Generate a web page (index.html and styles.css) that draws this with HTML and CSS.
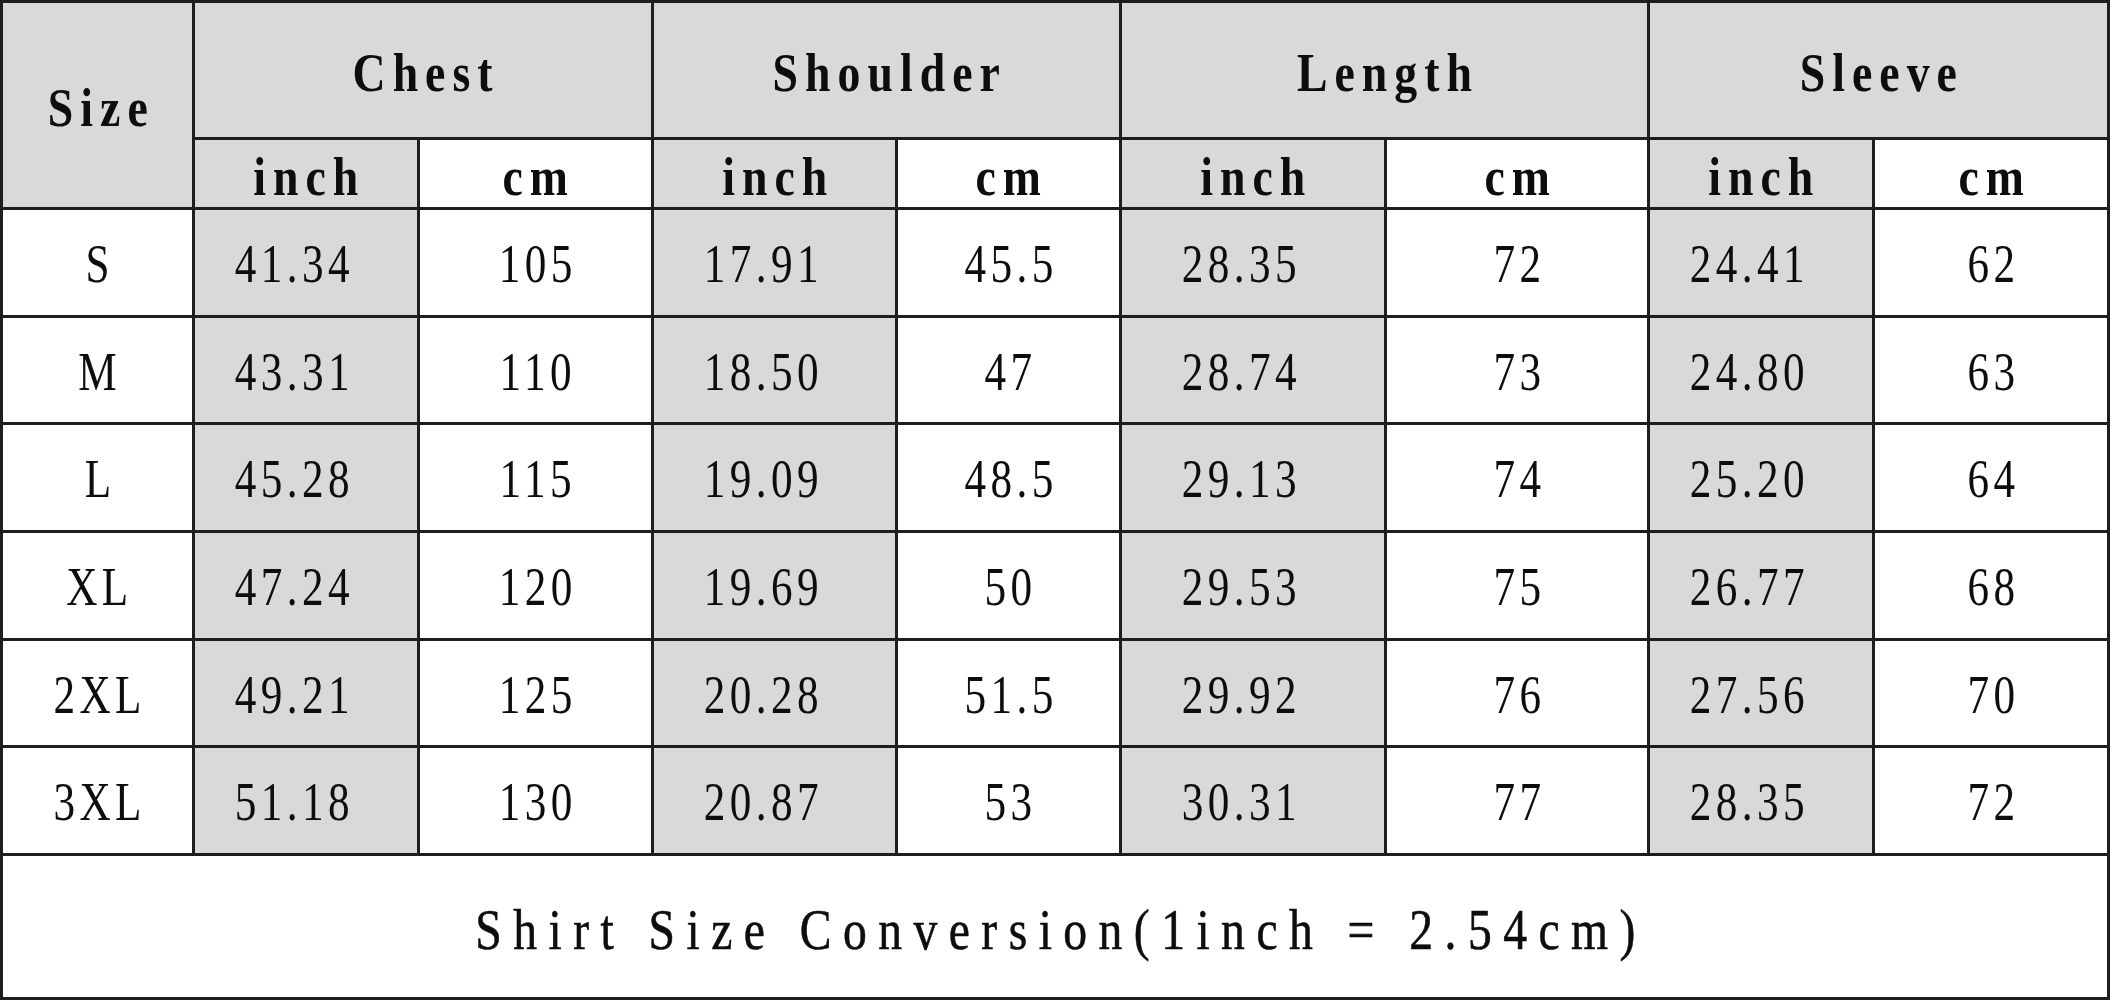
FILE: index.html
```html
<!DOCTYPE html>
<html>
<head>
<meta charset="utf-8">
<link rel="stylesheet" href="styles.css">
</head>
<body>
<table class="chart">
  <colgroup>
    <col class="c-size"><col class="c1"><col class="c2"><col class="c3"><col class="c4"><col class="c5"><col class="c6"><col class="c7"><col class="c8">
  </colgroup>
  <thead>
    <tr class="r-head">
      <th rowspan="2" class="g"><span class="t">Size</span></th>
      <th colspan="2" class="g"><span class="t">Chest</span></th>
      <th colspan="2" class="g"><span class="t">Shoulder</span></th>
      <th colspan="2" class="g"><span class="t">Length</span></th>
      <th colspan="2" class="g"><span class="t">Sleeve</span></th>
    </tr>
    <tr class="r-sub">
      <th class="g"><span class="t">inch</span></th><th><span class="t">cm</span></th>
      <th class="g"><span class="t">inch</span></th><th><span class="t">cm</span></th>
      <th class="g"><span class="t">inch</span></th><th><span class="t">cm</span></th>
      <th class="g"><span class="t">inch</span></th><th><span class="t">cm</span></th>
    </tr>
  </thead>
  <tbody>
    <tr class="r-a"><td><span class="t">S</span></td><td class="g in"><span class="t">41.34</span></td><td><span class="t">105</span></td><td class="g in"><span class="t">17.91</span></td><td><span class="t">45.5</span></td><td class="g in"><span class="t">28.35</span></td><td><span class="t">72</span></td><td class="g in"><span class="t">24.41</span></td><td><span class="t">62</span></td></tr>
    <tr class="r-b"><td><span class="t">M</span></td><td class="g in"><span class="t">43.31</span></td><td><span class="t">110</span></td><td class="g in"><span class="t">18.50</span></td><td><span class="t">47</span></td><td class="g in"><span class="t">28.74</span></td><td><span class="t">73</span></td><td class="g in"><span class="t">24.80</span></td><td><span class="t">63</span></td></tr>
    <tr class="r-a"><td><span class="t">L</span></td><td class="g in"><span class="t">45.28</span></td><td><span class="t">115</span></td><td class="g in"><span class="t">19.09</span></td><td><span class="t">48.5</span></td><td class="g in"><span class="t">29.13</span></td><td><span class="t">74</span></td><td class="g in"><span class="t">25.20</span></td><td><span class="t">64</span></td></tr>
    <tr class="r-a"><td><span class="t">XL</span></td><td class="g in"><span class="t">47.24</span></td><td><span class="t">120</span></td><td class="g in"><span class="t">19.69</span></td><td><span class="t">50</span></td><td class="g in"><span class="t">29.53</span></td><td><span class="t">75</span></td><td class="g in"><span class="t">26.77</span></td><td><span class="t">68</span></td></tr>
    <tr class="r-b"><td><span class="t">2XL</span></td><td class="g in"><span class="t">49.21</span></td><td><span class="t">125</span></td><td class="g in"><span class="t">20.28</span></td><td><span class="t">51.5</span></td><td class="g in"><span class="t">29.92</span></td><td><span class="t">76</span></td><td class="g in"><span class="t">27.56</span></td><td><span class="t">70</span></td></tr>
    <tr class="r-a"><td><span class="t">3XL</span></td><td class="g in"><span class="t">51.18</span></td><td><span class="t">130</span></td><td class="g in"><span class="t">20.87</span></td><td><span class="t">53</span></td><td class="g in"><span class="t">30.31</span></td><td><span class="t">77</span></td><td class="g in"><span class="t">28.35</span></td><td><span class="t">72</span></td></tr>
    <tr class="r-foot"><td colspan="9" class="foot"><span class="t">Shirt Size Conversion(1inch = 2.54cm)</span></td></tr>
  </tbody>
</table>
</body>
</html>
```

FILE: styles.css
```css
html, body {
  margin: 0;
  padding: 0;
  background: #ffffff;
}

.chart {
  border-collapse: separate;
  border-spacing: 0;
  table-layout: fixed;
  width: 2110px;
  height: 1000px;
  border-top: 3px solid #1e1e1e;
  border-left: 3px solid #1e1e1e;
  box-sizing: border-box;
}

.c-size { width: 192px; }
.c1 { width: 225px; }
.c2 { width: 234px; }
.c3 { width: 244px; }
.c4 { width: 224px; }
.c5 { width: 265px; }
.c6 { width: 263px; }
.c7 { width: 225px; }
.c8 { width: 235px; }

.chart th,
.chart td {
  border-right: 3px solid #1e1e1e;
  border-bottom: 3px solid #1e1e1e;
  padding: 0;
  text-align: center;
  vertical-align: middle;
  font-family: "Liberation Serif", "DejaVu Serif", serif;
  color: #0d0d0d;
  background: #ffffff;
  line-height: 1;
  white-space: nowrap;
}

.chart .g {
  background: #d9d9d9;
}

.r-head { height: 137px; }
.r-sub { height: 70px; }
.r-a { height: 108px; }
.r-b { height: 107px; }
.r-foot { height: 144px; }

.chart th {
  font-weight: bold;
  font-size: 52px;
  letter-spacing: 8px;
}

.chart th .t {
  display: inline-block;
  transform: scale(0.88, 1.04);
  padding-left: 8px;
  padding-top: 6px;
}

.chart td {
  font-weight: normal;
  font-size: 54px;
  letter-spacing: 5.5px;
}

.chart td .t {
  display: inline-block;
  transform: scale(0.8, 1.02);
  padding-left: 5.5px;
  padding-top: 3px;
}

.chart td.in {
  padding-right: 27px;
}

.chart td.foot {
  font-size: 58px;
  letter-spacing: 14px;
}

.chart td.foot .t {
  transform: scale(0.82, 1);
  -webkit-text-stroke: 0.6px #0d0d0d;
  padding-left: 14px;
  padding-top: 6px;
}
```
